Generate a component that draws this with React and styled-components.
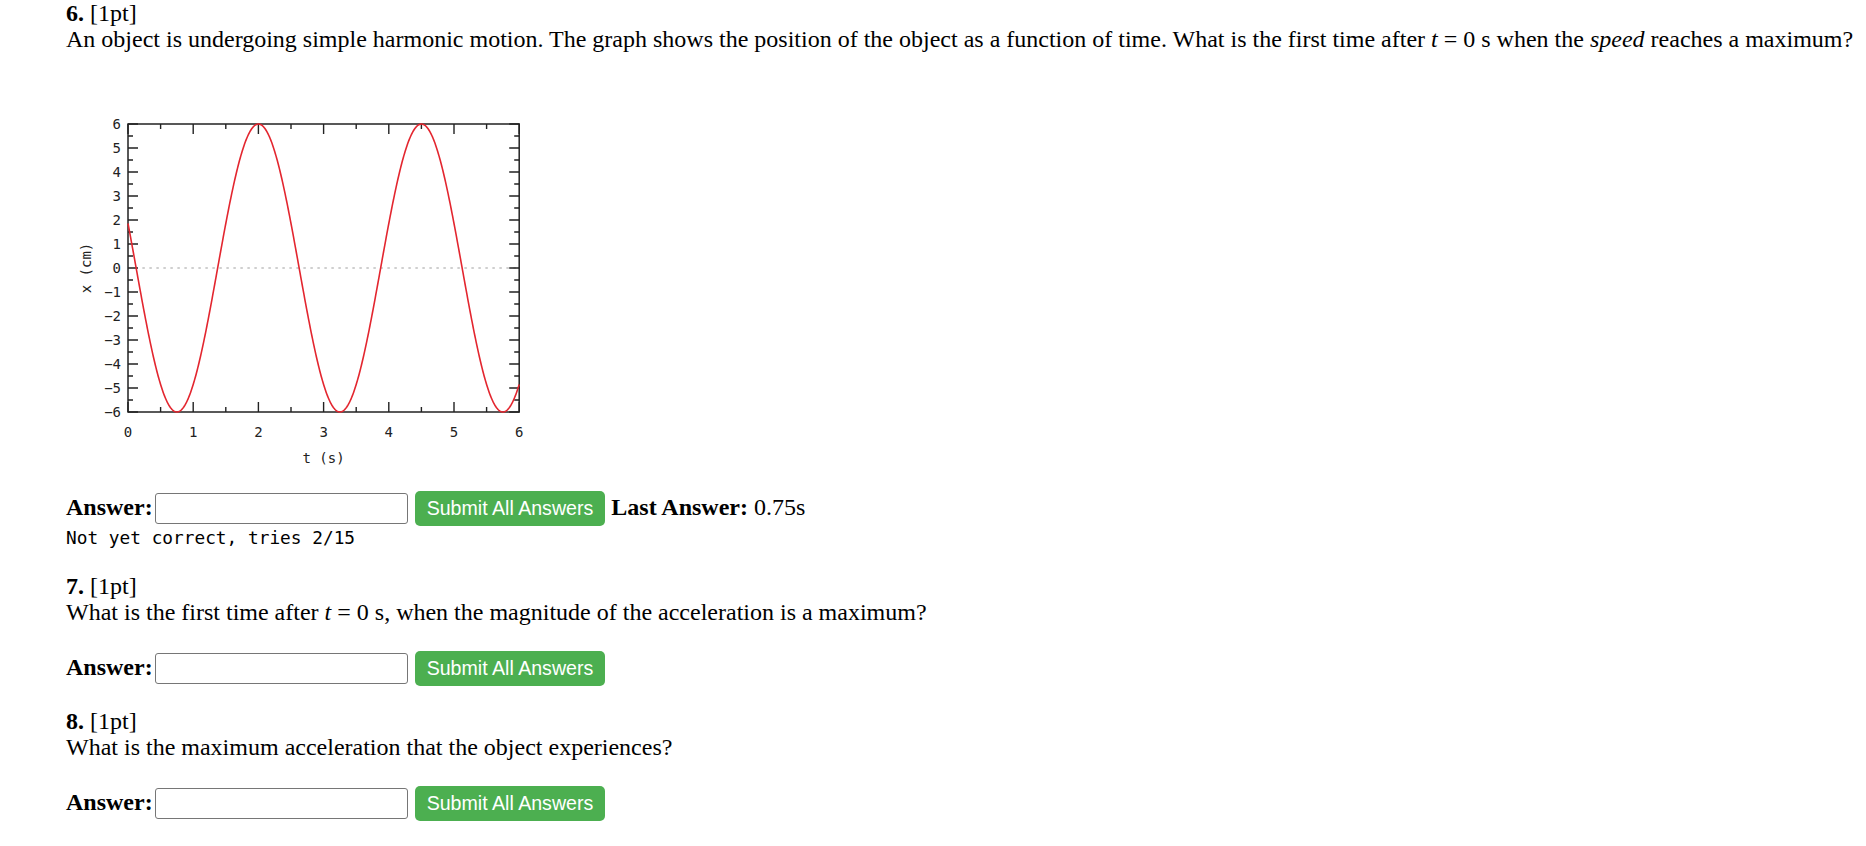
import styled, { createGlobalStyle } from 'styled-components';

const GlobalStyle = createGlobalStyle`
  html, body {
    margin: 0;
    padding: 0;
    background: #fff;
  }
`;

const Page = styled.div`
  padding: 1px 0 0 66px;
  font-family: "Liberation Serif", "Times New Roman", serif;
  font-size: 24px;
  line-height: 25.5px;
  color: #000;
`;

const Question = styled.section`
  margin-bottom: ${(p) => p.$gap || 23}px;
`;

const Heading = styled.div`
  white-space: nowrap;
`;

const Prompt = styled.div`
  white-space: nowrap;
`;

const AnswerRow = styled.div`
  display: flex;
  align-items: center;
  height: 36px;
  margin-top: ${(p) => p.$top}px;
  white-space: nowrap;
`;

const Label = styled.b`
  margin-right: 2px;
`;

const AnswerInput = styled.input`
  box-sizing: border-box;
  width: 253px;
  height: 31px;
  margin: 0 7px 0 0;
  padding: 1px 3px;
  border: 1px solid #767676;
  border-radius: 3px;
  font-size: 20px;
  background: #fff;
`;

const SubmitButton = styled.button`
  box-sizing: border-box;
  height: 35px;
  padding: 0 12px;
  border: none;
  border-radius: 5px;
  background: #4caf50;
  color: #fff;
  font-family: "Liberation Sans", Arial, sans-serif;
  font-size: 19.6px;
  cursor: pointer;
`;

const LastAnswer = styled.span`
  margin-left: 6px;
`;

const Feedback = styled.div`
  font-family: "DejaVu Sans Mono", Consolas, monospace;
  font-size: 17.8px;
  line-height: 24px;
`;

const GraphBox = styled.svg`
  display: block;
  margin-top: 48px;
  overflow: visible;
`;

const PlotText = styled.text`
  font-family: "DejaVu Sans Mono", monospace;
  font-size: 14px;
  fill: #222;
`;

const T0 = 62;
const TX = 65.2;
const Y0 = 168;
const VY = 24;
const tx = (t) => T0 + t * TX;
const vy = (v) => Y0 - v * VY;
const L = tx(0);
const R = tx(6);
const TOP = vy(6);
const BOT = vy(-6);

const curvePath = (() => {
  const pts = [];
  for (let i = 0; i <= 600; i++) {
    const t = i / 100;
    const v = 6 * Math.cos((2 * Math.PI * (t - 2)) / 2.5);
    pts.push(`${tx(t).toFixed(2)},${vy(v).toFixed(2)}`);
  }
  return 'M' + pts.join(' L');
})();

const Graph = () => {
  const ticks = [];
  for (let i = 0; i <= 12; i++) {
    const t = i / 2;
    const len = i % 2 === 0 ? 10 : 5;
    const x = tx(t);
    ticks.push(`M${x},${BOT} V${BOT - len} M${x},${TOP} V${TOP + len}`);
  }
  for (let i = -12; i <= 12; i++) {
    const v = i / 2;
    const len = i % 2 === 0 ? 10 : 5;
    const y = vy(v);
    ticks.push(`M${L},${y} H${L + len} M${R},${y} H${R - len}`);
  }
  const yLabels = [6, 5, 4, 3, 2, 1, 0, -1, -2, -3, -4, -5, -6];
  const xLabels = [0, 1, 2, 3, 4, 5, 6];
  return (
    <GraphBox width="470" height="370" viewBox="0 0 470 370">
      <path d={`M${tx(0.22)},${Y0} H${R - 2}`} stroke="#a0a0a0" strokeWidth="1.2" strokeDasharray="2.5 4.5" fill="none" />
      <path d={ticks.join(' ')} stroke="#222" strokeWidth="1.4" fill="none" />
      <rect x={L} y={TOP} width={R - L} height={BOT - TOP} stroke="#222" strokeWidth="1.5" fill="none" />
      <path d={curvePath} stroke="#e3262f" strokeWidth="1.6" fill="none" strokeLinejoin="round" />
      {yLabels.map((v) => (
        <PlotText key={v} x="55" y={vy(v)} textAnchor="end" dominantBaseline="central">
          {v < 0 ? `\u2212${-v}` : v}
        </PlotText>
      ))}
      {xLabels.map((t) => (
        <PlotText key={t} x={tx(t)} y="332" textAnchor="middle" dominantBaseline="central">
          {t}
        </PlotText>
      ))}
      <PlotText x={tx(3)} y="358" textAnchor="middle" dominantBaseline="central">
        t (s)
      </PlotText>
      <PlotText x="20" y={Y0} textAnchor="middle" dominantBaseline="central" transform={`rotate(-90 20 ${Y0})`}>
        x (cm)
      </PlotText>
    </GraphBox>
  );
};

const Answer = ({ top, last }) => (
  <AnswerRow $top={top}>
    <Label>Answer:</Label>
    <AnswerInput type="text" />
    <SubmitButton type="button">Submit All Answers</SubmitButton>
    {last && (
      <LastAnswer>
        <b>Last Answer:</b> {last}
      </LastAnswer>
    )}
  </AnswerRow>
);

const App = () => (
  <>
    <GlobalStyle />
    <Page>
      <Question $gap={24}>
        <Heading>
          <b>6.</b> [1pt]
        </Heading>
        <Prompt>
          An object is undergoing simple harmonic motion. The graph shows the position of the object as a function of time. What is the first time after <i>t</i> = 0 s when the <i>speed</i> reaches a maximum?
        </Prompt>
        <Graph />
        <Answer top={20} last="0.75s" />
        <Feedback>Not yet correct, tries 2/15</Feedback>
      </Question>
      <Question>
        <Heading>
          <b>7.</b> [1pt]
        </Heading>
        <Prompt>
          What is the first time after <i>t</i> = 0 s, when the magnitude of the acceleration is a maximum?
        </Prompt>
        <Answer top={25} />
      </Question>
      <Question>
        <Heading>
          <b>8.</b> [1pt]
        </Heading>
        <Prompt>What is the maximum acceleration that the object experiences?</Prompt>
        <Answer top={25} />
      </Question>
    </Page>
  </>
);

export default App;
